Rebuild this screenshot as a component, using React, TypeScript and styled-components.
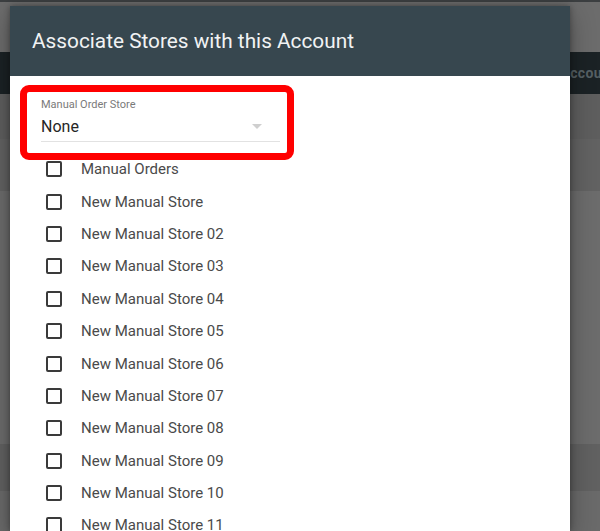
import { createGlobalStyle, styled } from "styled-components";

const GlobalStyle = createGlobalStyle`
  html, body {
    margin: 0;
    padding: 0;
    height: 100%;
    overflow: hidden;
    background: #6e6e6e;
  }
  #root {
    height: 100%;
  }
  * {
    box-sizing: border-box;
  }
`;

const stores = [
  "Manual Orders",
  "New Manual Store",
  "New Manual Store 02",
  "New Manual Store 03",
  "New Manual Store 04",
  "New Manual Store 05",
  "New Manual Store 06",
  "New Manual Store 07",
  "New Manual Store 08",
  "New Manual Store 09",
  "New Manual Store 10",
  "New Manual Store 11",
];

export default function App() {
  return (
    <>
      <GlobalStyle />
      <Page>
        <TopLine />
        <TopArea />
        <NavBar>
          <NavText>Account</NavText>
        </NavBar>
        <Band $tone="#5e5e5e" $height={45} />
        <Band $tone="#626262" $height={52} />
        <Band $tone="#6c6c6c" $height={253} />
        <Band $tone="#616161" $height={47} />
        <Band $tone="#6a6a6a" $height={40} />

        <Dialog>
          <Header>Associate Stores with this Account</Header>
          <Body>
            <Highlight>
              <SelectField>
                <FieldLabel>Manual Order Store</FieldLabel>
                <SelectRow>
                  <SelectValue>None</SelectValue>
                  <Arrow />
                </SelectRow>
              </SelectField>
            </Highlight>
            <StoreList>
              {stores.map((name) => (
                <StoreRow key={name}>
                  <Checkbox />
                  <StoreName>{name}</StoreName>
                </StoreRow>
              ))}
            </StoreList>
          </Body>
        </Dialog>
      </Page>
    </>
  );
}

const Page = styled.div`
  position: relative;
  height: 100%;
  display: flex;
  flex-direction: column;
  font-family: Roboto, "Liberation Sans", sans-serif;
`;

const TopLine = styled.div`
  height: 2px;
  background: #3c3f41;
`;

const TopArea = styled.div`
  height: 53px;
  background: #6c6c6c;
`;

const NavBar = styled.div`
  height: 45px;
  background: #1b2225;
  display: flex;
  align-items: center;
  justify-content: flex-end;
  overflow: hidden;
`;

const NavText = styled.span`
  color: #566064;
  font-size: 14px;
  font-weight: 700;
  margin-right: -15px;
  letter-spacing: 0.3px;
`;

const Band = styled.div<{ $tone: string; $height: number }>`
  height: ${(p) => p.$height}px;
  flex-shrink: 0;
  background: ${(p) => p.$tone};
`;

const Dialog = styled.div`
  position: absolute;
  left: 10px;
  top: 6px;
  width: 560px;
  bottom: 0;
  overflow: hidden;
  background: #ffffff;
  box-shadow: 0 0 6px rgba(0, 0, 0, 0.35), 0 8px 24px rgba(0, 0, 0, 0.3);
  display: flex;
  flex-direction: column;
`;

const Header = styled.div`
  height: 70px;
  flex-shrink: 0;
  background: #37474f;
  color: #f1f3f4;
  font-size: 20.8px;
  padding: 0 22px;
  display: flex;
  align-items: center;
`;

const Body = styled.div`
  padding: 9px 10px 0 10px;
  display: flex;
  flex-direction: column;
`;

const Highlight = styled.div`
  width: 274px;
  height: 75px;
  border: 7px solid #ff0000;
  border-radius: 9px;
  padding: 6px 6px 0 14px;
  position: relative;
  z-index: 1;
`;

const SelectField = styled.div`
  display: flex;
  flex-direction: column;
  border-bottom: 1px solid #e2e2e2;
  width: 239px;
`;

const FieldLabel = styled.span`
  font-size: 11px;
  color: #7a7a7a;
  line-height: 14px;
`;

const SelectRow = styled.div`
  display: flex;
  align-items: center;
  justify-content: space-between;
  height: 29px;
  padding-right: 18px;
`;

const SelectValue = styled.span`
  font-size: 16px;
  color: #262626;
`;

const Arrow = styled.span`
  width: 0;
  height: 0;
  border-left: 5px solid transparent;
  border-right: 5px solid transparent;
  border-top: 5px solid #cfcfcf;
`;

const StoreList = styled.div`
  display: flex;
  flex-direction: column;
  padding-left: 26px;
  margin-top: -7px;
`;

const StoreRow = styled.div`
  display: flex;
  align-items: center;
  height: 32.4px;
  flex-shrink: 0;
  gap: 19px;
`;

const Checkbox = styled.span`
  width: 16px;
  height: 16px;
  border: 2px solid #3a3a3a;
  border-radius: 2px;
  flex-shrink: 0;
`;

const StoreName = styled.span`
  font-size: 15px;
  color: #4a4a4a;
`;
